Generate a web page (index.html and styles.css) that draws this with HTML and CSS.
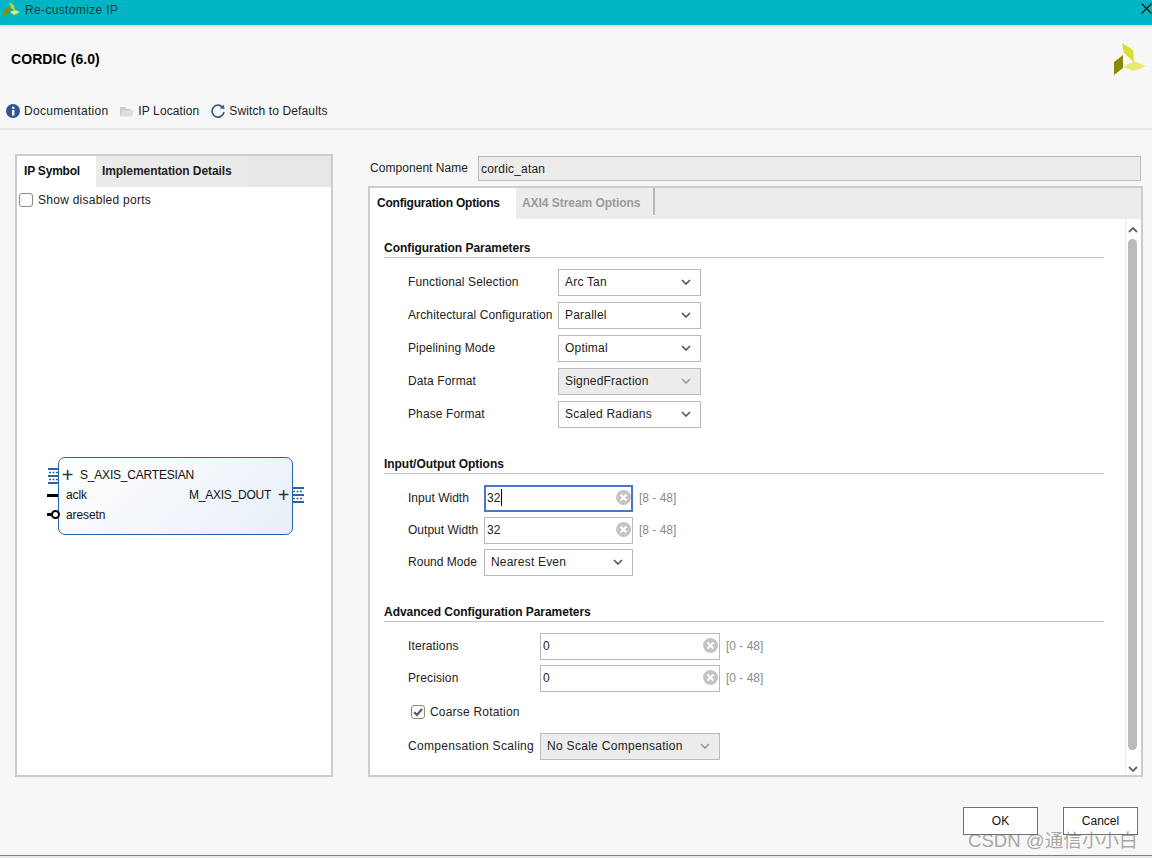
FILE: index.html
```html
<!DOCTYPE html>
<html lang="en">
<head>
<meta charset="utf-8">
<title>Re-customize IP</title>
<link rel="stylesheet" href="styles.css">
</head>
<body>
<div class="dialog">
  <header class="titlebar">
    <svg class="logo-small" viewBox="0 0 20 16" width="20" height="16"><polygon points="5,1 10,4 11,10 7,7" fill="#c8cc30"/><polygon points="6,11 11,9 16,11 10,14" fill="#e6ea70"/><polygon points="0,9 5,6 5,11 0,16" fill="#8a8a00"/></svg>
    <span class="titlebar-text">Re-customize IP</span>
    <svg class="close" viewBox="0 0 11 11" width="11" height="11"><path d="M0.5 0.5L10.5 10.5M10.5 0.5L0.5 10.5" stroke="#111" stroke-width="1.1" fill="none"/></svg>
  </header>
  <section class="head">
    <div class="head-top">
      <h1 class="ip-name">CORDIC (6.0)</h1>
      <svg class="logo-big" viewBox="0 0 32 32" width="32" height="32"><polygon points="8,0 19,7 20,19 10,10" fill="#d9dd33"/><polygon points="9,24 20,18 32,23 20,28" fill="#e6ea70"/><polygon points="0,19 9,12 9,25 0,32" fill="#8a8a00"/></svg>
    </div>
    <nav class="toolbar">
      <a class="tool tool-doc"><svg viewBox="0 0 14 14" width="14" height="14"><circle cx="7" cy="7" r="7" fill="#2f5597"/><rect x="6" y="6" width="2.4" height="5.5" fill="#fff"/><rect x="6" y="2.8" width="2.4" height="2" fill="#fff"/></svg>Documentation</a>
      <a class="tool tool-loc"><svg viewBox="0 0 14 12" width="14" height="12"><path d="M0 2V11H11V4H6L5 2Z" fill="#ccc"/><path d="M2 5.5H14L12 11.5H0Z" fill="#dedede"/></svg>IP Location</a>
      <a class="tool tool-switch"><svg viewBox="0 0 14 14" width="14" height="14"><path d="M11.6 3.2A6 6 0 1 0 13 8" fill="none" stroke="#3f5a86" stroke-width="1.7"/><polygon points="8.8,4.6 13.4,5 13,0.4" fill="#3f5a86"/></svg>Switch to Defaults</a>
    </nav>
  </section>
  <main class="content">
    <section class="left-panel">
      <div class="tabs">
        <div class="tab tab-active tab-symbol">IP Symbol</div>
        <div class="tab tab-impl">Implementation Details</div>
      </div>
      <label class="check check-ports"><span class="box"></span>Show disabled ports</label>
      <div class="symbol-area">
        <svg class="bus bus-left" viewBox="0 0 11 16"><path d="M0 1H11M0 8H11M0 15H11" stroke="#2a63a8" stroke-width="2"/><path d="M1 4.5H11M1 11.5H11" stroke="#2a63a8" stroke-width="1.5" stroke-dasharray="2 1.5"/></svg>
        <div class="pin pin-clk"></div>
        <div class="pin pin-rst"></div>
        <div class="pin-ring"></div>
        <svg class="bus bus-right" viewBox="0 0 11 16"><path d="M0 1H11M0 8H11M0 15H11" stroke="#2a63a8" stroke-width="2"/><path d="M0 4.5H10M0 11.5H10" stroke="#2a63a8" stroke-width="1.5" stroke-dasharray="2 1.5"/></svg>
        <div class="block">
          <div class="port port-first"><span class="plus">+</span>S_AXIS_CARTESIAN</div>
          <div class="port port-mid"><span>aclk</span><span class="dout">M_AXIS_DOUT<span class="plus plus-r">+</span></span></div>
          <div class="port">aresetn</div>
        </div>
      </div>
    </section>
    <section class="right-col">
      <div class="comp-row">
        <span class="comp-label">Component Name</span>
        <div class="comp-input">cordic_atan</div>
      </div>
      <div class="right-panel">
        <div class="tabs tabs-right">
          <div class="tab tab-active tab-config">Configuration Options</div>
          <div class="tab tab-axi">AXI4 Stream Options</div>
        </div>
        <div class="scroll-body">
          <div class="form">
            <h2 class="group-title group-first">Configuration Parameters</h2>
            <div class="rows rows-a">
              <div class="row"><span class="lbl lbl-a">Functional Selection</span><div class="select sel-a">Arc Tan<svg class="chev" viewBox="0 0 10 6"><path d="M1 1L5 5L9 1" fill="none" stroke="#555" stroke-width="1.6"/></svg></div></div>
              <div class="row"><span class="lbl lbl-a">Architectural Configuration</span><div class="select sel-a">Parallel<svg class="chev" viewBox="0 0 10 6"><path d="M1 1L5 5L9 1" fill="none" stroke="#555" stroke-width="1.6"/></svg></div></div>
              <div class="row"><span class="lbl lbl-a">Pipelining Mode</span><div class="select sel-a">Optimal<svg class="chev" viewBox="0 0 10 6"><path d="M1 1L5 5L9 1" fill="none" stroke="#555" stroke-width="1.6"/></svg></div></div>
              <div class="row"><span class="lbl lbl-a">Data Format</span><div class="select sel-a select-off">SignedFraction<svg class="chev" viewBox="0 0 10 6"><path d="M1 1L5 5L9 1" fill="none" stroke="#999" stroke-width="1.6"/></svg></div></div>
              <div class="row"><span class="lbl lbl-a">Phase Format</span><div class="select sel-a">Scaled Radians<svg class="chev" viewBox="0 0 10 6"><path d="M1 1L5 5L9 1" fill="none" stroke="#555" stroke-width="1.6"/></svg></div></div>
            </div>
            <h2 class="group-title group-second">Input/Output Options</h2>
            <div class="rows rows-b">
              <div class="row"><span class="lbl lbl-b">Input Width</span><div class="input inp-b input-focus"><span class="val">32<span class="caret"></span></span><svg class="clear" viewBox="0 0 15 15"><circle cx="7.5" cy="7.5" r="7.5" fill="#c4c4c4"/><path d="M4.5 4.5L10.5 10.5M10.5 4.5L4.5 10.5" stroke="#fff" stroke-width="2"/></svg></div><span class="range">[8 - 48]</span></div>
              <div class="row"><span class="lbl lbl-b">Output Width</span><div class="input inp-b"><span class="val">32</span><svg class="clear" viewBox="0 0 15 15"><circle cx="7.5" cy="7.5" r="7.5" fill="#c4c4c4"/><path d="M4.5 4.5L10.5 10.5M10.5 4.5L4.5 10.5" stroke="#fff" stroke-width="2"/></svg></div><span class="range">[8 - 48]</span></div>
              <div class="row"><span class="lbl lbl-b">Round Mode</span><div class="select inp-b">Nearest Even<svg class="chev" viewBox="0 0 10 6"><path d="M1 1L5 5L9 1" fill="none" stroke="#555" stroke-width="1.6"/></svg></div></div>
            </div>
            <h2 class="group-title group-third">Advanced Configuration Parameters</h2>
            <div class="rows rows-b">
              <div class="row"><span class="lbl lbl-c">Iterations</span><div class="input inp-c"><span class="val">0</span><svg class="clear" viewBox="0 0 15 15"><circle cx="7.5" cy="7.5" r="7.5" fill="#c4c4c4"/><path d="M4.5 4.5L10.5 10.5M10.5 4.5L4.5 10.5" stroke="#fff" stroke-width="2"/></svg></div><span class="range">[0 - 48]</span></div>
              <div class="row"><span class="lbl lbl-c">Precision</span><div class="input inp-c"><span class="val">0</span><svg class="clear" viewBox="0 0 15 15"><circle cx="7.5" cy="7.5" r="7.5" fill="#c4c4c4"/><path d="M4.5 4.5L10.5 10.5M10.5 4.5L4.5 10.5" stroke="#fff" stroke-width="2"/></svg></div><span class="range">[0 - 48]</span></div>
            </div>
            <label class="check check-coarse"><span class="box box-on"><svg viewBox="0 0 12 12" width="12" height="12"><path d="M2.2 6.2L5 9L10 3" fill="none" stroke="#555" stroke-width="2"/></svg></span>Coarse Rotation</label>
            <div class="row row-comp"><span class="lbl lbl-c lbl-wide">Compensation Scaling</span><div class="select inp-c select-off select-wide">No Scale Compensation<svg class="chev" viewBox="0 0 10 6"><path d="M1 1L5 5L9 1" fill="none" stroke="#999" stroke-width="1.6"/></svg></div></div>
          </div>
          <div class="scrollbar">
            <svg class="arrow" viewBox="0 0 10 6"><path d="M1 5L5 1L9 5" fill="none" stroke="#666" stroke-width="1.8"/></svg>
            <div class="thumb"></div>
            <svg class="arrow" viewBox="0 0 10 6"><path d="M1 1L5 5L9 1" fill="none" stroke="#666" stroke-width="1.8"/></svg>
          </div>
        </div>
      </div>
    </section>
  </main>
  <footer class="footer">
    <button class="btn">OK</button>
    <button class="btn">Cancel</button>
    <span class="watermark">CSDN @通信小小白</span>
  </footer>
</div>
</body>
</html>
```
FILE: styles.css
```css
* { box-sizing: border-box; }
html, body { margin: 0; padding: 0; }
body { font: 12px "Liberation Sans", Arial, sans-serif; color: #111; background: #f7f7f7; }
.dialog { width: 1152px; height: 858px; display: flex; flex-direction: column; overflow: hidden; position: relative; border-bottom: 2px solid #e8e8e8; }

.titlebar { height: 25px; flex: none; background: #00b6c4; display: flex; align-items: flex-start; padding: 1px 0 0 4px; position: relative; box-shadow: 0 2px 0 #e4e9e9; }
.logo-small { margin-right: 1px; }
.titlebar-text { color: #1d3b40; letter-spacing: 0.35px; line-height: 16px; margin-top: 1px; }
.close { position: absolute; right: 0; top: 3px; }

.head { height: 105px; flex: none; border-bottom: 2px solid #e6e6e6; }
.head-top { height: 69px; display: flex; justify-content: space-between; padding: 18px 6px 0 11px; }
.ip-name { margin: 8px 0 0; font-size: 14px; font-weight: bold; color: #000; letter-spacing: 0.08px; }
.toolbar { display: flex; align-items: center; padding-left: 6px; height: 20px; margin-top: 7px; color: #222; }
.tool { display: flex; align-items: center; margin-right: 12px; }
.tool svg { margin-right: 4px; }
.tool-doc { letter-spacing: 0.28px; }
.tool-loc { letter-spacing: 0.1px; }
.tool-switch { letter-spacing: 0.12px; }

.content { flex: 1; display: flex; padding: 24px 9px 0 15px; }
.left-panel { width: 319px; height: 623px; background: #fff; border: 2px solid #ccc; display: flex; flex-direction: column; }
.tabs { height: 31px; flex: none; display: flex; background: #ececec; font-weight: bold; letter-spacing: -0.05px; }
.tab { padding-top: 8px; }
.tab-active { background: #fff; }
.tab-symbol { width: 79px; padding-left: 7px; letter-spacing: -0.2px; }
.tab-impl { width: 152px; padding-left: 6px; background: #ebebeb; color: #222; letter-spacing: -0.08px; }
.left-panel .tabs { background: #e7e7e7; }

.check { display: flex; align-items: center; color: #222; letter-spacing: 0.2px; }
.box { width: 14px; height: 14px; border: 1.5px solid #888; border-radius: 3px; background: #fbfbfb; margin-right: 5px; display: flex; align-items: center; justify-content: center; flex: none; }
.check-ports { margin: 6px 0 0 2px; height: 14px; letter-spacing: 0.26px; }

.symbol-area { flex: 1; position: relative; }
.block { position: absolute; left: 41px; top: 250px; width: 235px; height: 78px; border: 1px solid #2a63a8; border-radius: 7px; background: linear-gradient(135deg, #fff 0%, #e8eff8 100%); padding-top: 7px; }
.port { height: 20px; padding: 0 7px; line-height: 20px; display: flex; justify-content: space-between; color: #111; letter-spacing: -0.1px; }
.port-first { justify-content: flex-start; padding-left: 0; letter-spacing: -0.2px; }
.plus { font-size: 20px; font-weight: normal; color: #333; width: 17px; text-align: center; line-height: 20px; letter-spacing: 0; }
.port-first .plus { margin-right: 4px; }
.dout { display: flex; letter-spacing: -0.25px; }
.plus-r { margin: 0 -7px 0 4px; }
.bus { position: absolute; width: 11px; height: 16px; z-index: 1; }
.bus-left { left: 31px; top: 261px; }
.bus-right { left: 276px; top: 280px; }
.pin { position: absolute; left: 30px; height: 3px; width: 11px; background: #000; }
.pin-clk { top: 287px; }
.pin-rst { top: 306px; }
.pin-ring { position: absolute; left: 34px; top: 303px; width: 9px; height: 9px; border-radius: 50%; border: 2.5px solid #000; background: #fff; z-index: 2; }

.right-col { margin-left: 35px; width: 775px; display: flex; flex-direction: column; }
.comp-row { display: flex; align-items: center; height: 26px; margin-top: 1px; margin-bottom: 5px; }
.comp-label { width: 110px; padding-left: 2px; color: #222; letter-spacing: 0.05px; }
.comp-input { width: 663px; height: 25px; border: 1px solid #bbb; background: #ececec; padding: 5px 2px; line-height: 14px; color: #222; letter-spacing: 0.2px; }
.right-panel { width: 775px; height: 591px; border: 2px solid #ccc; background: #fff; display: flex; flex-direction: column; }
.tabs-right { height: 31px; background: #ececec; }
.tab-config { width: 146px; padding-left: 7px; color: #111; letter-spacing: -0.22px; }
.tab-axi { width: 139px; padding-left: 6px; color: #9b9b9b; border-right: 2px solid #b8b8b8; height: 27px; }
.scroll-body { flex: 1; display: flex; min-height: 0; }
.form { flex: 1; padding-left: 14px; }
.group-title { width: 720px; margin: 0; font-size: 12px; font-weight: bold; height: 17px; line-height: 14px; border-bottom: 1px solid #c8c8c8; padding-top: 0; color: #111; letter-spacing: -0.04px; }
.group-first { margin-top: 22px; }
.group-second { margin-top: 29px; }
.group-third { margin-top: 29px; }
.rows { display: flex; flex-direction: column; margin-top: 11px; }
.rows-a { row-gap: 6px; }
.rows-b { row-gap: 5px; }
.row { display: flex; align-items: center; height: 27px; }
.lbl { padding: 0 0 2px 24px; color: #222; flex: none; letter-spacing: 0.12px; }
.lbl-a { width: 174px; }
.lbl-b { width: 100px; letter-spacing: 0.02px; }
.lbl-c { width: 156px; }
.lbl-wide { letter-spacing: 0.3px; }
.select { height: 27px; border: 1px solid #bbb; background: #fff; display: flex; align-items: center; justify-content: space-between; padding: 0 9px 2px 6px; color: #222; letter-spacing: 0.2px; }
.select-off { background: #ececec; }
.select-wide { letter-spacing: 0.3px; }
.sel-a { width: 143px; }
.inp-b { width: 149px; }
.inp-c { width: 180px; }
.chev { width: 10px; height: 6px; }
.input { height: 27px; border: 1px solid #bbb; background: #fff; display: flex; align-items: center; justify-content: space-between; padding: 0 1px 2px 2px; color: #222; }
.input-focus { border: 2px solid #4a78c8; padding: 0 0 2px 1px; }
.val { display: flex; align-items: center; }
.caret { width: 1px; height: 17px; background: #000; margin-left: 1px; }
.clear { width: 15px; height: 15px; }
.range { margin-left: 6px; padding-bottom: 2px; color: #8a8a8a; }
.check-coarse { margin: 12px 0 0 27px; height: 16px; }
.row-comp { margin-top: 13px; }

.scrollbar { width: 14px; flex: none; display: flex; flex-direction: column; align-items: center; margin-right: 2px; background: #fff; border-left: 1px solid #eee; }
.arrow { width: 10px; height: 6px; margin: 8px 0 7px; flex: none; }
.scrollbar .arrow:last-child { margin: 16px 0 0; }
.thumb { width: 9px; height: 511px; background: #bababa; border-radius: 5px; margin-top: -1px; }

.footer { height: 78px; flex: none; position: relative; display: flex; justify-content: flex-end; column-gap: 25px; padding: 29px 14px 0 0; border-bottom: 1px solid #19a9b8; }
.btn { width: 75px; height: 28px; border: 1px solid #707070; background: #fff; font: 12px "Liberation Sans", Arial, sans-serif; color: #111; padding: 0; }
.watermark { position: absolute; left: 968px; top: 47px; font: 18.6px "Liberation Sans", "Noto Sans CJK SC", sans-serif; color: rgba(110,110,110,0.6); white-space: nowrap; }
```
